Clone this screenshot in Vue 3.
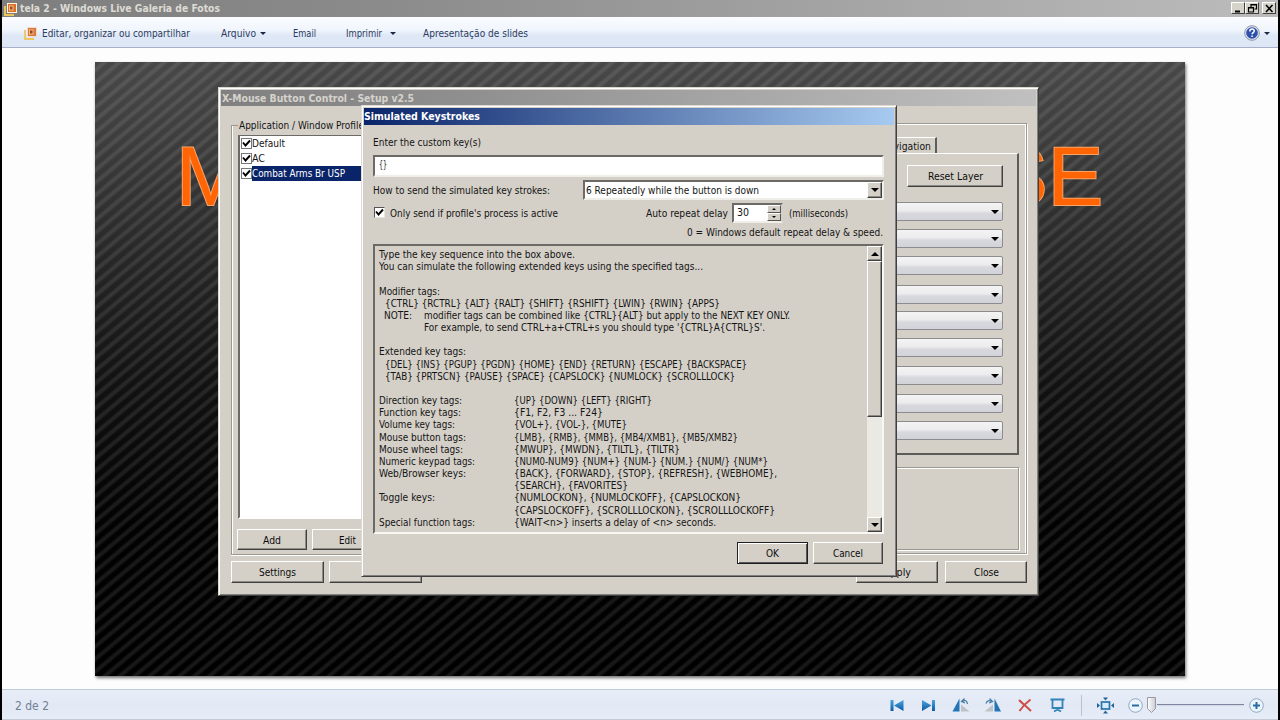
<script setup>
// Condenses a label horizontally so that it takes exactly the given width.
const vFit = {
  mounted(el, { value }) {
    const natural = el.getBoundingClientRect().width
    el.style.transform = `translateY(1px) scaleX(${value / natural})`
    el.style.marginRight = `${value - natural}px`
  },
}

const profiles = [
  { name: 'Default', w: 33 },
  { name: 'AC', w: 13 },
  { name: 'Combat Arms Br USP', w: 93, selected: true },
]

const layerRows = [0, 8, 8, 10, 7, 8, 9, 9, 8]

const help = [
  [{ t: 'Type the key sequence into the box above.', w: 196 }],
  [{ t: 'You can simulate the following extended keys using the specified tags...', w: 324 }],
  [],
  [{ t: 'Modifier tags:', w: 61 }],
  [{ t: '{CTRL} {RCTRL} {ALT} {RALT} {SHIFT} {RSHIFT} {LWIN} {RWIN} {APPS}', w: 335, c: 'indent' }],
  [{ t: 'NOTE:', w: 28, c: 'note' }, { t: 'modifier tags can be combined like {CTRL}{ALT} but apply to the NEXT KEY ONLY.', w: 366 }],
  [{ t: '', w: 0, c: 'note' }, { t: "For example, to send CTRL+a+CTRL+s you should type '{CTRL}A{CTRL}S'.", w: 341 }],
  [],
  [{ t: 'Extended key tags:', w: 87 }],
  [{ t: '{DEL} {INS} {PGUP} {PGDN} {HOME} {END} {RETURN} {ESCAPE} {BACKSPACE}', w: 362, c: 'indent' }],
  [{ t: '{TAB} {PRTSCN} {PAUSE} {SPACE} {CAPSLOCK} {NUMLOCK} {SCROLLLOCK}', w: 350, c: 'indent' }],
  [],
  [{ t: 'Direction key tags:', w: 83, c: 'key' }, { t: '{UP} {DOWN} {LEFT} {RIGHT}', w: 138 }],
  [{ t: 'Function key tags:', w: 82, c: 'key' }, { t: '{F1, F2, F3 ... F24}', w: 89 }],
  [{ t: 'Volume key tags:', w: 76, c: 'key' }, { t: '{VOL+}, {VOL-}, {MUTE}', w: 113 }],
  [{ t: 'Mouse button tags:', w: 87, c: 'key' }, { t: '{LMB}, {RMB}, {MMB}, {MB4/XMB1}, {MB5/XMB2}', w: 224 }],
  [{ t: 'Mouse wheel tags:', w: 84, c: 'key' }, { t: '{MWUP}, {MWDN}, {TILTL}, {TILTR}', w: 166 }],
  [{ t: 'Numeric keypad tags:', w: 96, c: 'key' }, { t: '{NUM0-NUM9} {NUM+} {NUM-} {NUM.} {NUM/} {NUM*}', w: 254 }],
  [{ t: 'Web/Browser keys:', w: 87, c: 'key' }, { t: '{BACK}, {FORWARD}, {STOP}, {REFRESH}, {WEBHOME},', w: 263 }],
  [{ t: '', w: 0, c: 'key' }, { t: '{SEARCH}, {FAVORITES}', w: 114 }],
  [{ t: 'Toggle keys:', w: 56, c: 'key' }, { t: '{NUMLOCKON}, {NUMLOCKOFF}, {CAPSLOCKON}', w: 227 }],
  [{ t: '', w: 0, c: 'key' }, { t: '{CAPSLOCKOFF}, {SCROLLLOCKON}, {SCROLLLOCKOFF}', w: 261 }],
  [{ t: 'Special function tags:', w: 96, c: 'key' }, { t: '{WAIT<n>} inserts a delay of <n> seconds.', w: 202 }],
]
</script>

<template>
  <div class="screen">
    <header class="titlebar">
      <svg class="app-ico" viewBox="0 0 14 14" width="14" height="14">
        <path d="M1 4v9h9" fill="none" stroke="#e8c45c" stroke-width="2" />
        <rect x="3.500" y="1.500" width="9" height="9" fill="#d9702c" stroke="#fff3dc" />
        <rect x="5.500" y="4" width="3.500" height="4" fill="#a84a18" stroke="#ffd9a0" stroke-width=".8" />
      </svg>
      <span v-fit="200" class="fit title-text">tela 2 - Windows Live Galeria de Fotos</span>
      <div class="win-btns">
        <i class="wb"><svg viewBox="0 0 13 11" width="13" height="11"><path d="M3 8.500h5" stroke="#000" stroke-width="2" /></svg></i>
        <i class="wb"><svg viewBox="0 0 13 11" width="13" height="11"><path d="M5 4V1.500h5.500v4.500H8.500M4.500 2h6" fill="none" stroke="#000" stroke-width="1.200" /><path d="M2.500 4.500h5v4.500h-5zM2 5h6" fill="none" stroke="#000" stroke-width="1.200" /></svg></i>
        <i class="wb close"><svg viewBox="0 0 13 11" width="13" height="11"><path d="M3 2l6.500 7M9.500 2L3 9" stroke="#000" stroke-width="1.600" /></svg></i>
      </div>
    </header>

    <nav class="toolbar">
      <svg class="edit-ico" viewBox="0 0 14 14" width="14" height="14">
        <path d="M1 4v9h9" fill="none" stroke="#edc65e" stroke-width="1.800" />
        <rect x="3.500" y="1.500" width="9" height="9" fill="#d87a42" stroke="#f4dcc4" />
        <rect x="5.500" y="4" width="3.500" height="4" fill="#9c4416" stroke="#ffd0a0" stroke-width=".8" />
      </svg>
      <span v-fit="148" class="fit">Editar, organizar ou compartilhar</span>
      <span v-fit="35" class="fit m-arq">Arquivo</span><i class="tri" />
      <span v-fit="23" class="fit m-email">Email</span>
      <span v-fit="36" class="fit m-imp">Imprimir</span><i class="tri wide" />
      <span v-fit="105" class="fit m-apr">Apresentação de slides</span>
      <div class="help-btn">
        <svg viewBox="0 0 16 16" width="16" height="16">
          <circle cx="8" cy="8" r="7.300" fill="#dfe3ec" stroke="#8f97a8" />
          <circle cx="8" cy="8" r="5.800" fill="#2c4fae" />
          <path d="M5.800 6.400c0-3.200 4.600-3 4.500-.3 0 1.500-2.200 1.500-2.200 3.200M8.100 10.500v1.600" fill="none" stroke="#fff" stroke-width="1.500" />
        </svg>
        <i class="tri" />
      </div>
    </nav>

    <main class="canvas">
      <div class="photo">
        <span class="big left">M</span>
        <span class="big right">SE</span>

        <section class="setup">
          <div class="setup-title"><span v-fit="192" class="fit">X-Mouse Button Control - Setup v2.5</span></div>
          <div class="setup-body">
            <fieldset class="profiles">
              <legend><span v-fit="125" class="fit">Application / Window Profile</span></legend>
              <div class="list">
                <div v-for="p in profiles" :key="p.name" class="item" :class="{ sel: p.selected }">
                  <i class="check sm"><svg viewBox="0 0 9 9" width="9" height="9"><path d="M1 3.500l2.500 3L8 1.500" /></svg></i>
                  <span class="item-name"><span v-fit="p.w" class="fit">{{ p.name }}</span></span>
                </div>
              </div>
              <div class="list-btns">
                <div class="btn"><span v-fit="18" class="fit">Add</span></div>
                <div class="btn"><span v-fit="17" class="fit">Edit</span></div>
              </div>
            </fieldset>
            <div class="layers">
              <div class="tab"><span v-fit="50" class="fit">Navigation</span></div>
              <div class="tab-panel">
                <div class="btn reset"><span v-fit="55" class="fit">Reset Layer</span></div>
                <div class="combos">
                  <div v-for="(gap, i) in layerRows" :key="i" class="combo" :style="{ marginTop: gap + 'px' }"><i class="arrow" /></div>
                </div>
              </div>
              <div class="desc" />
            </div>
          </div>
          <div class="setup-foot">
            <div class="btn wide"><span v-fit="37" class="fit">Settings</span></div>
            <div class="btn wide second" />
            <div class="btn foot apply"><span v-fit="27" class="fit">Apply</span></div>
            <div class="btn foot"><span v-fit="25" class="fit">Close</span></div>
          </div>
        </section>

        <section class="dialog">
          <div class="dialog-title"><span v-fit="116" class="fit">Simulated Keystrokes</span></div>
          <div class="dialog-body">
            <div class="line enter"><span v-fit="108" class="fit">Enter the custom key(s)</span></div>
            <div class="input"><span v-fit="8" class="fit">{}</span></div>
            <div class="line how">
              <span v-fit="177" class="fit">How to send the simulated key strokes:</span>
              <div class="select">
                <span v-fit="173" class="fit">6 Repeatedly while the button is down</span>
                <i class="sbtn"><i class="arrow" /></i>
              </div>
            </div>
            <div class="line only">
              <i class="check"><svg viewBox="0 0 9 9" width="9" height="9"><path d="M1 3.500l2.500 3L8 1.500" /></svg></i>
              <span v-fit="168" class="fit only-text">Only send if profile's process is active</span>
              <div class="repeat">
                <span v-fit="82" class="fit">Auto repeat delay</span>
                <div class="spin">
                  <span v-fit="12" class="fit">30</span>
                  <div class="spin-btns"><i><b class="up" /></i><i><b /></i></div>
                </div>
                <span v-fit="59" class="fit">(milliseconds)</span>
              </div>
            </div>
            <div class="line zero"><span v-fit="196" class="fit">0 = Windows default repeat delay &amp; speed.</span></div>
            <div class="help">
              <div class="help-text">
                <div v-for="(row, i) in help" :key="i" class="row">
                  <div v-for="(s, j) in row" :key="j" :class="s.c"><span v-if="s.t" v-fit="s.w" class="fit">{{ s.t }}</span></div>
                </div>
              </div>
              <div class="scroll">
                <i class="sc"><i class="arrow up" /></i>
                <i class="thumb" />
                <i class="track" />
                <i class="sc"><i class="arrow" /></i>
              </div>
            </div>
            <div class="actions">
              <div class="btn ok"><span v-fit="13" class="fit">OK</span></div>
              <div class="btn"><span v-fit="30" class="fit">Cancel</span></div>
            </div>
          </div>
        </section>
      </div>
    </main>

    <footer class="bottom">
      <span v-fit="34" class="fit count">2 de 2</span>
      <svg class="controls" viewBox="880 0 398 30" width="398" height="30">
        <defs>
          <linearGradient id="blue" x1="0" y1="0" x2="0" y2="1"><stop offset="0" stop-color="#4ba3dc" /><stop offset="1" stop-color="#0b5aa5" /></linearGradient>
          <linearGradient id="knob" x1="0" y1="0" x2="1" y2="0"><stop offset="0" stop-color="#fff" /><stop offset="1" stop-color="#c9cbd2" /></linearGradient>
        </defs>
        <path d="M890.500 10h3v11h-3zM903.500 10v11l-9.500-5.500z" fill="url(#blue)" />
        <path d="M932 10h3v11h-3zM922 10v11l9.500-5.500z" fill="url(#blue)" />
        <path d="M959.500 8.500v13H952.500z" fill="#2475b5" />
        <path d="M961 14.500l8.500 7H961z" fill="#bfc1c5" />
        <path d="M962 11.500c3-2 5-.8 5.500 2.500M964.500 8.500l-3 3 3.500 1.500" fill="none" stroke="#4b7fa8" stroke-width="1.300" />
        <path d="M994.500 8.500v13h6.500z" fill="#2475b5" />
        <path d="M993 14.500l-8.500 7h8.500z" fill="#bfc1c5" />
        <path d="M986 13.500c1-3 3-3.500 5.500-2M989.500 8.500l3 3-3.500 1.500" fill="none" stroke="#4b7fa8" stroke-width="1.300" />
        <path d="M1019 10c3 3 8 7 12 11M1030.500 9.500c-4 3-8 7-11 11.500" fill="none" stroke="#cf4c48" stroke-width="2" />
        <path d="M1050.500 9.500h14M1052.500 10v8h10v-8M1057.500 18v2M1054 21.500l3.500-2 3.500 2" fill="none" stroke="#3184b9" stroke-width="1.800" />
        <path d="M1081.500 5v21" stroke="#b9c2ce" />
        <rect x="1101.500" y="12" width="8" height="7" fill="#d5eafa" stroke="#2874ab" stroke-width="1.700" />
        <path d="M1105.500 10.500l-2.500-3h5zM1105.500 20.500l-2.500 3h5zM1100 15.500l-3-2.500v5zM1111 15.500l3-2.500v5z" fill="#236292" />
        <circle cx="1135.500" cy="15.500" r="6.800" fill="#edf5fc" stroke="#8caac5" />
        <path d="M1132 15.500h7" stroke="#286da8" stroke-width="2" />
        <path d="M1157 14.500h87" stroke="#8086a2" /><path d="M1157 15.500h87" stroke="#d3d8e5" />
        <path d="M1147.500 7.500h8v11l-4 4-4-4z" fill="url(#knob)" stroke="#989ba6" />
        <circle cx="1256.500" cy="15.500" r="6.800" fill="#edf5fc" stroke="#8caac5" />
        <path d="M1253 15.500h7M1256.500 12v7" stroke="#286da8" stroke-width="2" />
      </svg>
    </footer>
  </div>
</template>

<style>
html, body { margin: 0; overflow: hidden; }
</style>

<style scoped>
* { box-sizing: border-box; }
.screen {
  width: 1280px; height: 720px; display: flex; flex-direction: column;
  border-left: 2px solid #000; border-right: 2px solid #000; background: #fdfdfe;
  font-family: "DejaVu Sans Condensed", "DejaVu Sans", sans-serif; font-size: 11px; line-height: 12px; color: #141414;
  overflow: hidden;
}
.fit { display: inline-block; white-space: pre; transform-origin: 0 50%; flex: none; }
i { font-style: normal; display: block; flex: none; }

.titlebar { flex: none; height: 17px; display: flex; align-items: center; background: linear-gradient(90deg, #7e7e7e, #8b8b8b 30%, #bcbcbc); color: #dedbd5; font-weight: bold; }
.app-ico { margin: 0 1px 0 2px; }
.title-text { margin: -2px 0 0 1px; }
.win-btns { margin-left: auto; display: flex; padding-right: 2px; margin-top: -1px; }
.wb { width: 14px; height: 12px; background: #d6d3cb; border: 1px solid; border-color: #fff #404040 #404040 #fff; overflow: hidden; }
.wb.close { margin-left: 3px; }
.wb svg { display: block; }

.toolbar { flex: none; height: 31px; display: flex; align-items: center; background: linear-gradient(#fafcff, #f0f5fd 45%, #dfe8f6 60%, #dce6f5); border-bottom: 1px solid #a7b0c6; color: #2c3b5e; padding: 1px 0 0 22px; }
.edit-ico { margin-right: 4px; }
.m-arq { margin-left: 31px; }
.m-email { margin-left: 27px; }
.m-imp { margin-left: 30px; }
.m-apr { margin-left: 27px; }
.tri { width: 0; height: 0; margin: 1px 0 0 4px; border: 3px solid transparent; border-top-color: #1d2845; border-bottom-width: 0; }
.tri.wide { margin-left: 8px; }
.help-btn { margin-left: auto; display: flex; align-items: center; padding-right: 8px; }

.canvas { flex: none; height: 641px; padding: 14px 0 0 93px; }
.photo {
  position: relative; width: 1090px; height: 614px; box-shadow: 1px 2px 3px rgba(0,0,0,.55);
  background: repeating-linear-gradient(140deg, rgba(255,255,255,0) 0, rgba(255,255,255,0) 3.200px, rgba(255,255,255,.095) 5.400px, rgba(255,255,255,.095) 7.200px, rgba(255,255,255,0) 9.600px),
    linear-gradient(#484848 0, #3e3e3e 12%, #272727 32%, #121212 52%, #020202 75%, #000);
}
.big { position: absolute; top: 68px; font: 83px/94px "Liberation Sans", sans-serif; color: #ff6505; -webkit-text-stroke: 2px #f7a468; paint-order: stroke; white-space: nowrap; }
.big.left { left: 81px; }
.big.right { right: 82px; }

.setup { position: absolute; left: 123px; top: 25px; width: 821px; height: 509px; background: #d4d0c8; border: 1px solid; border-color: #d9d6d0 #404040 #404040 #d9d6d0; box-shadow: inset 1px 1px #fff, inset -1px -1px #808080; padding: 2px; }
.setup-title { height: 16px; padding: 0 0 0 1px; line-height: 16px; background: linear-gradient(90deg, #808080, #8f8f8f 30%, #c0c0c0); color: #d6d3cd; font-weight: bold; }
.setup-body { display: flex; padding: 12px 9px 0 10px; height: 449px; }
.profiles { margin: 0; padding: 0 6px 0 6px; width: 300px; height: 437px; border: 1px solid #9b988f; box-shadow: inset 1px 0 #fff, 0 1px #fff; }
.profiles legend { padding: 0 1px; height: 14px; line-height: 14px; margin-left: 0; }
.list { margin-top: 3px; height: 384px; background: #fff; border: 2px solid; border-color: #6c6a66 #fff #fff #6c6a66; border-top-width: 1px; }
.item { display: flex; align-items: center; height: 15px; }
.item-name { flex: 1; height: 15px; line-height: 14px; }
.sel .item-name { background: #0a246a; color: #fff; }
.check { width: 11px; height: 11px; background: #fff; border: 1px solid; border-color: #555 #e8e6e0 #e8e6e0 #555; }
.check.sm { border-color: #777; margin: 0 0 0 1px; }
.check svg { display: block; }
.check path { fill: none; stroke: #000; stroke-width: 1.900; }
.list-btns { display: flex; gap: 5px; margin: 10px 0 0 -1px; }
.btn { display: flex; align-items: center; justify-content: center; width: 70px; height: 21px; background: #d4d0c8; border: 1px solid; border-color: #fff #404040 #404040 #fff; box-shadow: inset -1px -1px #8f8c85; color: #0c0c0c; }
.layers { flex: 1; border: 1px solid #9b988f; box-shadow: inset -1px 1px #fff, 1px 1px #fff; margin-left: 10px; height: 431px; padding: 13px 7px 0 6px; margin-top: 5px; }
.tab { width: 389px; height: 17px; border-top: 1px solid #fff; border-right: 2px solid #5e5c58; text-align: right; padding-right: 4px; line-height: 15px; }
.tab-panel { height: 302px; margin-top: -1px; border: 2px solid; border-color: #fff #5e5c58 #5e5c58 #fff; border-top-width: 1px; padding: 11px 14px 0 0; display: flex; flex-direction: column; align-items: flex-end; }
.btn.reset { width: 96px; height: 22px; }
.combos { width: 300px; margin-top: 15px; }
.combo { height: 19px; border: 1px solid #8c8c90; border-radius: 2px; background: linear-gradient(#f4f4f4, #ececee 45%, #d8d8de 60%, #d2d2da); display: flex; align-items: center; justify-content: flex-end; padding-right: 3px; }
.arrow { width: 0; height: 0; border: 4px solid transparent; border-top-color: #000; border-bottom-width: 0; }
.arrow.up { border-width: 0 4px 4px; border-bottom-color: #000; }
.desc { margin-top: 12px; height: 83px; border: 1px solid #9b988f; box-shadow: inset 1px 1px #fff, 1px 1px #fff; }
.setup-foot { display: flex; padding: 6px 0 0 10px; }
.btn.wide { width: 93px; height: 22px; }
.btn.second { margin-left: 5px; }
.btn.foot { width: 82px; height: 22px; margin-left: 7px; }
.btn.foot.apply { margin-left: 434px; }

.dialog { position: absolute; left: 266px; top: 43px; width: 536px; height: 472px; background: #d4d0c8; border: 1px solid; border-color: #dedbd5 #404040 #404040 #dedbd5; box-shadow: inset 1px 1px #fff, inset -1px -1px #808080; padding: 2px; }
.dialog-title { height: 17px; line-height: 16px; padding-left: 0; background: linear-gradient(90deg, #0a246a, #a6caf0); color: #fff; font-weight: bold; }
.dialog-body { padding: 0 10px 0 9px; display: flex; flex-direction: column; }
.line { display: flex; align-items: center; }
.enter { height: 12px; margin-top: 11px; }
.input { height: 22px; margin-top: 7px; background: #fff; border: 2px solid; border-color: #6c6a66 #f0eee9 #f0eee9 #6c6a66; padding-left: 4px; line-height: 14px; }
.how { height: 20px; margin-top: 3px; justify-content: space-between; }
.select { width: 301px; height: 20px; background: #fff; border: 2px solid; border-color: #6c6a66 #f0eee9 #f0eee9 #6c6a66; display: flex; align-items: center; padding-left: 1px; }
.sbtn { margin-left: auto; width: 15px; height: 16px; background: #d4d0c8; border: 1px solid; border-color: #fff #404040 #404040 #fff; box-shadow: inset -1px -1px #8f8c85; display: flex; align-items: center; justify-content: center; }
.only { height: 20px; margin-top: 3px; padding-left: 1px; }
.only .check { margin-top: -1px; }
.only-text { margin-left: 5px; }
.repeat { margin-left: auto; display: flex; align-items: center; padding-right: 36px; }
.spin { width: 51px; height: 20px; margin: 0 6px 0 4px; background: #fff; border: 2px solid; border-color: #6c6a66 #d4d0c8 #f0eee9 #6c6a66; display: flex; align-items: center; padding: 0 0 2px 3px; justify-content: space-between; }
.spin-btns { height: 16px; margin-bottom: -2px; }
.spin-btns i { width: 14px; height: 8px; background: #d4d0c8; border: 1px solid; border-color: #fff #555 #555 #fff; display: flex; align-items: center; justify-content: center; }
.spin-btns b { border: 2px solid transparent; border-top-color: #000; border-bottom-width: 0; }
.spin-btns b.up { border-width: 0 2px 2px; border-bottom-color: #000; }
.zero { height: 12px; margin-top: 3px; justify-content: flex-end; padding-right: 1px; }
.help { height: 290px; margin-top: 6px; border: 2px solid; border-color: #6c6a66 #f8f7f3 #f8f7f3 #6c6a66; display: flex; justify-content: space-between; }
.help-text { padding: 2px 0 0 3.500px; }
.row { display: flex; height: 12.180px; line-height: 12.180px; }
.indent { padding-left: 6px; }
.note { width: 45px; padding-left: 5px; }
.key { width: 135.500px; }
.scroll { width: 15px; display: flex; flex-direction: column; background: #ebe9e4; }
.sc, .thumb { background: #d4d0c8; border: 1px solid; border-color: #fff #404040 #404040 #fff; box-shadow: inset -1px -1px #8f8c85; }
.sc { height: 15px; display: flex; align-items: center; justify-content: center; }
.thumb { height: 156px; }
.track { flex: 1; }
.actions { display: flex; justify-content: flex-end; gap: 5px; margin: 8px 1px 0 0; }
.actions .btn { height: 22px; }
.actions .ok { width: 71px; border: 1px solid #202020; box-shadow: inset 1px 1px #fff, inset -1px -1px #555; }

.bottom { flex: none; height: 31px; display: flex; align-items: center; border-top: 1px solid #bfcbda; border-bottom: 1px solid #c6ccd5; background: linear-gradient(#e9eef8, #e2e9f5 50%, #e6edf8); color: #728095; }
.count { margin-left: 13px; font-size: 12.500px; font-family: "DejaVu Sans", sans-serif; }
.controls { margin-left: auto; display: block; margin-right: 0; }
</style>
